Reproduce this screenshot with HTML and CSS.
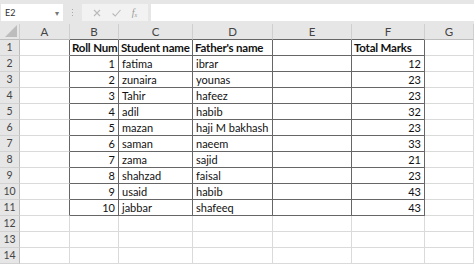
FILE: index.html
```html
<!DOCTYPE html>
<html>
<head>
<meta charset="utf-8">
<link rel="stylesheet" href="styles.css">
</head>
<body>
<div class="toolbar">
  <div class="namebox"><span class="ref">E2</span><span class="drop">&#9662;</span></div>
  <div class="grip"><i></i><i></i><i></i></div>
  <div class="actions">
    <svg class="ico" width="10" height="10" viewBox="0 0 10 10"><path d="M2 2 L8 8 M8 2 L2 8" stroke="#b9b9b9" stroke-width="1.1" fill="none"/></svg>
    <svg class="ico" width="11" height="10" viewBox="0 0 11 10"><path d="M1.5 5.5 L4.2 8 L9.5 2" stroke="#b9b9b9" stroke-width="1.1" fill="none"/></svg>
    <span class="fx">f<sub>x</sub></span>
  </div>
  <div class="formula"></div>
</div>
<div class="sheet">
  <div class="corner"><svg width="12" height="12" viewBox="0 0 12 12"><path d="M12 0 L12 12 L0 12 Z" fill="#bdbdbd"/></svg></div>
  <div class="ch">A</div><div class="ch">B</div><div class="ch">C</div><div class="ch">D</div><div class="ch">E</div><div class="ch">F</div><div class="ch">G</div>

  <div class="rh">1</div><div class="c ea"></div><div class="c t b">Roll Num</div><div class="c t b">Student name</div><div class="c t b">Father's name</div><div class="c t"></div><div class="c t b">Total Marks</div><div class="c"></div>
  <div class="rh">2</div><div class="c ea"></div><div class="c t n">1</div><div class="c t">fatima</div><div class="c t">ibrar</div><div class="c t"></div><div class="c t n">12</div><div class="c"></div>
  <div class="rh">3</div><div class="c ea"></div><div class="c t n">2</div><div class="c t">zunaira</div><div class="c t">younas</div><div class="c t"></div><div class="c t n">23</div><div class="c"></div>
  <div class="rh">4</div><div class="c ea"></div><div class="c t n">3</div><div class="c t">Tahir</div><div class="c t">hafeez</div><div class="c t"></div><div class="c t n">23</div><div class="c"></div>
  <div class="rh">5</div><div class="c ea"></div><div class="c t n">4</div><div class="c t">adil</div><div class="c t">habib</div><div class="c t"></div><div class="c t n">32</div><div class="c"></div>
  <div class="rh">6</div><div class="c ea"></div><div class="c t n">5</div><div class="c t">mazan</div><div class="c t">haji M bakhash</div><div class="c t"></div><div class="c t n">23</div><div class="c"></div>
  <div class="rh">7</div><div class="c ea"></div><div class="c t n">6</div><div class="c t">saman</div><div class="c t">naeem</div><div class="c t"></div><div class="c t n">33</div><div class="c"></div>
  <div class="rh">8</div><div class="c ea"></div><div class="c t n">7</div><div class="c t">zama</div><div class="c t">sajid</div><div class="c t"></div><div class="c t n">21</div><div class="c"></div>
  <div class="rh">9</div><div class="c ea"></div><div class="c t n">8</div><div class="c t">shahzad</div><div class="c t">faisal</div><div class="c t"></div><div class="c t n">23</div><div class="c"></div>
  <div class="rh">10</div><div class="c ea"></div><div class="c t n">9</div><div class="c t">usaid</div><div class="c t">habib</div><div class="c t"></div><div class="c t n">43</div><div class="c"></div>
  <div class="rh">11</div><div class="c ea"></div><div class="c t n">10</div><div class="c t">jabbar</div><div class="c t">shafeeq</div><div class="c t"></div><div class="c t n">43</div><div class="c"></div>
  <div class="rh">12</div><div class="c"></div><div class="c"></div><div class="c"></div><div class="c"></div><div class="c"></div><div class="c"></div><div class="c"></div>
  <div class="rh">13</div><div class="c"></div><div class="c"></div><div class="c"></div><div class="c"></div><div class="c"></div><div class="c"></div><div class="c"></div>
  <div class="rh">14</div><div class="c"></div><div class="c"></div><div class="c"></div><div class="c"></div><div class="c"></div><div class="c"></div><div class="c"></div>
</div>
</body>
</html>
```
FILE: styles.css
```css
* { box-sizing: border-box; }
html, body { margin: 0; padding: 0; }
body {
  width: 474px;
  height: 264px;
  overflow: hidden;
  background: #ffffff;
  font-family: Lato, "Open Sans", sans-serif;
  color: #222;
}
.toolbar {
  height: 24px;
  background: #e6e6e6;
  display: flex;
  align-items: flex-start;
  padding-top: 4px;
  padding-left: 1px;
}
.namebox {
  width: 62px;
  height: 17px;
  background: #fff;
  display: flex;
  align-items: center;
  justify-content: space-between;
  padding: 0 4px 0 4px;
  font-size: 9px;
  color: #333;
}
.drop { font-size: 8px; color: #777; }
.grip {
  width: 18px;
  height: 17px;
  display: flex;
  flex-direction: column;
  align-items: center;
  justify-content: center;
  gap: 2px;
}
.grip i {
  display: block;
  width: 1px;
  height: 1px;
  background: #a8a8a8;
}
.actions {
  width: 66px;
  height: 17px;
  margin-left: 1px;
  background: #f2f2f2;
  display: flex;
  align-items: center;
  justify-content: space-around;
  padding: 0 6px 0 5px;
}
.fx {
  font-family: "Liberation Serif", serif;
  font-style: italic;
  font-size: 10px;
  color: #9a9a9a;
  line-height: 1;
}
.fx sub { font-size: 6px; vertical-align: -1px; }
.formula {
  flex: 1;
  height: 17px;
  margin-left: 3px;
  background: #fff;
}
.sheet {
  display: grid;
  grid-template-columns: 20px 50px 49px 74px 80px 79px 73px 1fr;
  grid-auto-rows: 16px;
  font-size: 11px;
}
.corner {
  background: #e6e6e6;
  border-right: 1px solid #cfcfcf;
  border-bottom: 1px solid #bdbdbd;
  display: flex;
  align-items: flex-end;
  justify-content: flex-end;
  padding: 0 2px 2px 0;
}
.ch {
  background: #e6e6e6;
  border-right: 1px solid #cfcfcf;
  border-bottom: 1px solid #bdbdbd;
  text-align: center;
  line-height: 15px;
  color: #444;
  font-size: 11.5px;
}
.rh {
  background: #e6e6e6;
  border-right: 1px solid #bdbdbd;
  border-bottom: 1px solid #d2d2d2;
  text-align: center;
  line-height: 15px;
  color: #444;
  font-size: 10.5px;
}
.c {
  border-right: 1px solid #dadada;
  border-bottom: 1px solid #dadada;
  line-height: 15px;
  padding: 0 3px;
  white-space: nowrap;
  overflow: hidden;
  color: #111;
}
.c.t {
  border-right: 1px solid #666;
  border-bottom: 1px solid #666;
}
.c.ea { border-right: 1px solid #666; }
.ch:nth-child(3), .ch:nth-child(4), .ch:nth-child(5), .ch:nth-child(6), .ch:nth-child(7) {
  border-bottom-color: #666;
}
.b { font-weight: 700; padding-left: 2px; letter-spacing: -0.2px; font-size: 11.5px; }
.n { text-align: right; }
```
